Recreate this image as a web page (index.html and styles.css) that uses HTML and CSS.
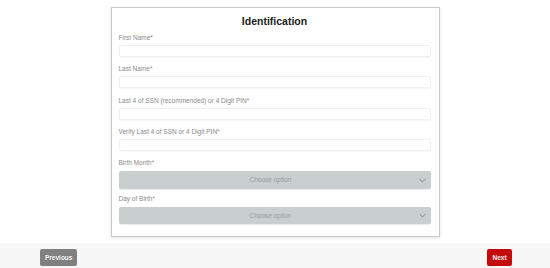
FILE: index.html
```html
<!DOCTYPE html>
<html>
<head>
<meta charset="utf-8">
<link rel="stylesheet" href="styles.css">
</head>
<body>
<main class="page">
  <section class="card">
    <h1 class="title">Identification</h1>
    <div class="field">
      <label class="label">First Name*</label>
      <div class="input"></div>
    </div>
    <div class="field">
      <label class="label">Last Name*</label>
      <div class="input"></div>
    </div>
    <div class="field">
      <label class="label">Last 4 of SSN (recommended) or 4 Digit PIN*</label>
      <div class="input"></div>
    </div>
    <div class="field">
      <label class="label">Verify Last 4 of SSN or 4 Digit PIN*</label>
      <div class="input"></div>
    </div>
    <div class="field">
      <label class="label label-sel">Birth Month*</label>
      <div class="select"><span>Choose option</span>
        <svg class="chev" viewBox="0 0 10 6" width="7" height="5"><path d="M1 1l4 4 4-4" fill="none" stroke="#7d8282" stroke-width="1.4"/></svg>
      </div>
    </div>
    <div class="field">
      <label class="label label-sel">Day of Birth*</label>
      <div class="select"><span>Choose option</span>
        <svg class="chev" viewBox="0 0 10 6" width="7" height="5"><path d="M1 1l4 4 4-4" fill="none" stroke="#7d8282" stroke-width="1.4"/></svg>
      </div>
    </div>
  </section>
</main>
<footer class="footer">
  <button class="btn btn-prev">Previous</button>
  <button class="btn btn-next">Next</button>
</footer>
</body>
</html>
```
FILE: styles.css
```css
html, body {
  margin: 0;
  padding: 0;
  background: #ffffff;
  font-family: "Liberation Sans", Arial, sans-serif;
}
.page {
  height: 243px;
  padding-top: 7px;
  box-sizing: border-box;
  display: flex;
  justify-content: center;
}
.card {
  width: 329px;
  height: 230px;
  box-sizing: border-box;
  border: 1px solid #c9c9c9;
  box-shadow: 0 1px 3px rgba(0,0,0,0.12);
  padding: 6px 8px 0 7px;
  background: #fff;
}
.title {
  margin: 0 0 5px;
  text-align: center;
  font-family: "Liberation Sans", Arial, sans-serif;
  font-weight: 700;
  font-size: 10.5px;
  line-height: 15px;
  color: #222;
}
.field {
  display: flex;
  flex-direction: column;
}
.label {
  font-size: 6.5px;
  line-height: 8px;
  color: #8a8a8a;
  margin-bottom: 3px;
}
.label-sel {
  margin-bottom: 4px;
}
.input {
  height: 12px;
  box-sizing: border-box;
  border: 1px solid #f0f0f0;
  border-radius: 2px;
  margin-bottom: 8.25px;
  box-shadow: 0 1px 1px rgba(0,0,0,0.03);
}
.select {
  height: 17.5px;
  background: #c9cfcf;
  border-radius: 2px;
  display: flex;
  align-items: center;
  justify-content: center;
  position: relative;
  font-size: 6.5px;
  color: #979d9d;
  margin-bottom: 6px;
  padding-right: 8px;
  box-shadow: 0 1px 1px rgba(0,0,0,0.08);
}
.chev {
  position: absolute;
  right: 5px;
  top: 6.5px;
}
.footer {
  height: 25px;
  background: #f7f7f7;
  display: flex;
  justify-content: space-between;
  align-items: flex-start;
  padding: 6px 38px 0 40px;
  box-sizing: border-box;
}
.btn {
  border: none;
  border-radius: 2px;
  height: 17px;
  padding: 0 5px;
  font-family: "Liberation Sans", Arial, sans-serif;
  font-weight: 700;
  font-size: 6.5px;
  color: #f4f4f4;
}
.btn-prev {
  background: #808080;
  width: 37px;
}
.btn-next {
  background: #c40a0a;
  width: 25px;
}
```
